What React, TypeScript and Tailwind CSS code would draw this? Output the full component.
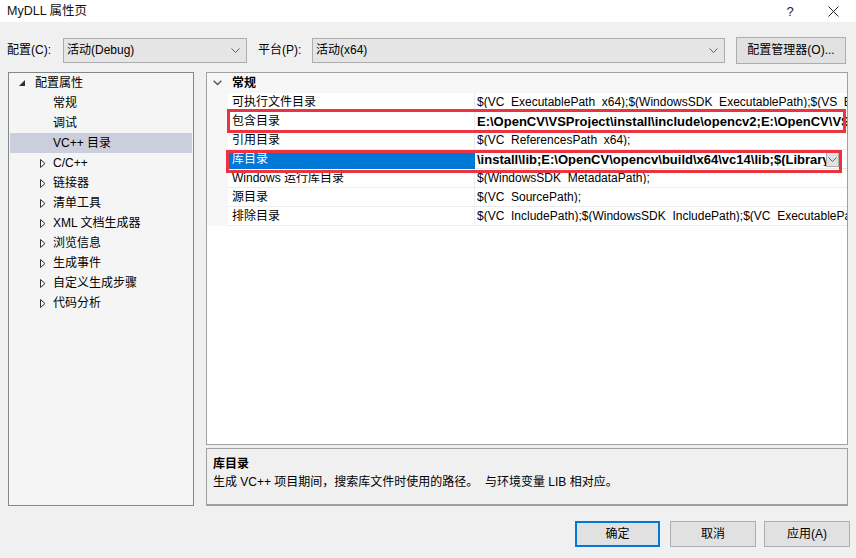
import React from "react";

function Chevron({ className = "" }: { className?: string }) {
  return (
    <svg width="9" height="5" viewBox="0 0 9 5" className={className}>
      <path d="M0.5 0.5 L4.5 4.5 L8.5 0.5" fill="none" stroke="#606060" strokeWidth="1" />
    </svg>
  );
}

function Collapsed() {
  return (
    <svg width="6" height="9" viewBox="0 0 6 9" className="shrink-0">
      <path d="M0.5 0.5 L5 4.5 L0.5 8.5 Z" fill="none" stroke="#303030" strokeWidth="1" />
    </svg>
  );
}

const treeItems: { label: string; expandable: boolean; selected?: boolean }[] = [
  { label: "常规", expandable: false },
  { label: "调试", expandable: false },
  { label: "VC++ 目录", expandable: false, selected: true },
  { label: "C/C++", expandable: true },
  { label: "链接器", expandable: true },
  { label: "清单工具", expandable: true },
  { label: "XML 文档生成器", expandable: true },
  { label: "浏览信息", expandable: true },
  { label: "生成事件", expandable: true },
  { label: "自定义生成步骤", expandable: true },
  { label: "代码分析", expandable: true },
];

const rows: { name: string; value: string; bold?: boolean; selected?: boolean }[] = [
  { name: "可执行文件目录", value: "$(VC_ExecutablePath_x64);$(WindowsSDK_ExecutablePath);$(VS_ExecutablePath);$(MSBuild_ExecutablePath)" },
  { name: "包含目录", value: "E:\\OpenCV\\VSProject\\install\\include\\opencv2;E:\\OpenCV\\VSProject\\install\\include", bold: true },
  { name: "引用目录", value: "$(VC_ReferencesPath_x64);" },
  { name: "库目录", value: "\\install\\lib;E:\\OpenCV\\opencv\\build\\x64\\vc14\\lib;$(LibraryPath)", bold: true, selected: true },
  { name: "Windows 运行库目录", value: "$(WindowsSDK_MetadataPath);" },
  { name: "源目录", value: "$(VC_SourcePath);" },
  { name: "排除目录", value: "$(VC_IncludePath);$(WindowsSDK_IncludePath);$(VC_ExecutablePath_x64)" },
];

export default function App() {
  return (
    <div className="w-[856px] h-[558px] bg-[#f0f0f0] flex flex-col font-['Liberation_Sans','Noto_Sans_CJK_SC',sans-serif] text-[12px] text-black leading-none overflow-hidden">
      {/* title bar */}
      <div className="h-[22px] bg-white flex items-center pl-[7px] shrink-0">
        <span className="flex-1 text-[12.5px] text-[#111]">MyDLL 属性页</span>
        <span className="w-[14px] text-[13px] text-[#222] mr-[31px] text-center">?</span>
        <svg width="11" height="11" viewBox="0 0 11 11" className="mr-[17px]">
          <path d="M0.5 0.5 L10.5 10.5 M10.5 0.5 L0.5 10.5" stroke="#222" strokeWidth="1" />
        </svg>
      </div>

      {/* toolbar */}
      <div className="h-[26px] mt-[15px] mb-[9px] flex items-center pl-[7px] shrink-0">
        <span className="w-[56px] shrink-0">配置(C):</span>
        <div className="w-[184px] h-[25px] shrink-0 bg-[#e5e5e5] border border-[#adadad] flex items-center pl-[3px] pr-[6px]">
          <span className="flex-1">活动(Debug)</span>
          <Chevron />
        </div>
        <span className="ml-[11px] w-[54px] shrink-0">平台(P):</span>
        <div className="w-[413px] h-[25px] shrink-0 bg-[#e5e5e5] border border-[#adadad] flex items-center pl-[3px] pr-[6px]">
          <span className="flex-1">活动(x64)</span>
          <Chevron />
        </div>
        <div className="ml-[11px] w-[110px] h-[27px] shrink-0 bg-[#e1e1e1] border border-[#adadad] flex items-center justify-center">
          配置管理器(O)...
        </div>
      </div>

      {/* main */}
      <div className="h-[434px] flex px-[8px] gap-[12px] shrink-0">
        {/* tree */}
        <div className="w-[186px] shrink-0 bg-[#f5f5f5] border border-[#828790] flex flex-col px-[1px]">
          <div className="h-[20px] flex items-center">
            <svg width="6" height="6" viewBox="0 0 6 6" className="ml-[9px] mr-[10px]">
              <path d="M6 0 L6 6 L0 6 Z" fill="#303030" />
            </svg>
            <span className="whitespace-nowrap">配置属性</span>
          </div>
          {treeItems.map((it) => (
            <div
              key={it.label}
              className={`h-[20px] flex items-center ${it.selected ? "bg-[#cccedb]" : ""}`}
            >
              <div className="w-[43px] shrink-0 flex justify-end pr-[7px]">{it.expandable ? <Collapsed /> : null}</div>
              <span className="whitespace-nowrap">{it.label}</span>
            </div>
          ))}
        </div>

        {/* right column */}
        <div className="w-[642px] min-w-0 shrink-0 flex flex-col gap-[3px]">
          <div className="relative h-[373px] bg-white border border-[#a0a0a0] flex flex-col overflow-hidden">
            <div className="h-[20px] bg-[#f7f7f7] flex items-center shrink-0">
              <svg width="9" height="6" viewBox="0 0 9 6" className="ml-[6px] mr-[10px]">
                <path d="M0.7 0.7 L4.5 4.5 L8.3 0.7" fill="none" stroke="#555" strokeWidth="1.4" />
              </svg>
              <span className="font-bold">常规</span>
            </div>
            {rows.map((r) => (
              <div key={r.name} className="h-[19px] flex shrink-0">
                <div className="w-[21px] bg-[#f7f7f7] shrink-0" />
                <div
                  className={`w-[247px] shrink-0 flex items-center pl-[4px] border-b whitespace-nowrap ${
                    r.selected
                      ? "bg-[#0078d7] text-white border-[#0078d7]"
                      : "border-r border-[#ececec]"
                  }`}
                >
                  {r.name}
                </div>
                <div className="flex-1 min-w-0 flex items-center border-b border-[#ececec] overflow-hidden">
                  <span
                    className={`pl-[2px] whitespace-nowrap overflow-hidden ${r.bold ? "font-bold text-[13px]" : ""} ${
                      r.selected ? "w-[351px] shrink-0" : "w-full"
                    }`}
                  >
                    {r.value}
                  </span>
                  {r.selected && (
                    <div className="w-[13px] h-[15px] shrink-0 bg-[#e1e1e1] border border-[#adadad] flex items-center justify-center">
                      <Chevron />
                    </div>
                  )}
                </div>
              </div>
            ))}
            {/* red annotation boxes */}
            <div className="absolute left-[20px] top-[36px] w-[619px] h-[24px] border-[3px] border-[#ee3340]" />
            <div className="absolute left-[19px] top-[77px] w-[616px] h-[23px] border-[3px] border-[#ee3340]" />
          </div>

          <div className="flex-1 bg-[#f0f0f0] border border-[#a0a0a0] border-b-2 flex flex-col pl-[6px] pt-[8px]">
            <span className="font-bold leading-[14px]">库目录</span>
            <span className="mt-[4px] leading-[14px]">生成 VC++ 项目期间，搜索库文件时使用的路径。&nbsp;&nbsp;与环境变量 LIB 相对应。</span>
          </div>
        </div>
      </div>

      {/* buttons */}
      <div className="h-[26px] mt-[15px] flex justify-end pr-[6px] shrink-0">
        <div className="w-[85px] h-[26px] bg-[#e1e1e1] border-2 border-[#0078d7] flex items-center justify-center">确定</div>
        <div className="ml-[10px] w-[86px] h-[26px] bg-[#e1e1e1] border border-[#adadad] flex items-center justify-center">取消</div>
        <div className="ml-[8px] w-[86px] h-[26px] bg-[#e1e1e1] border border-[#adadad] flex items-center justify-center">应用(A)</div>
      </div>
    </div>
  );
}
